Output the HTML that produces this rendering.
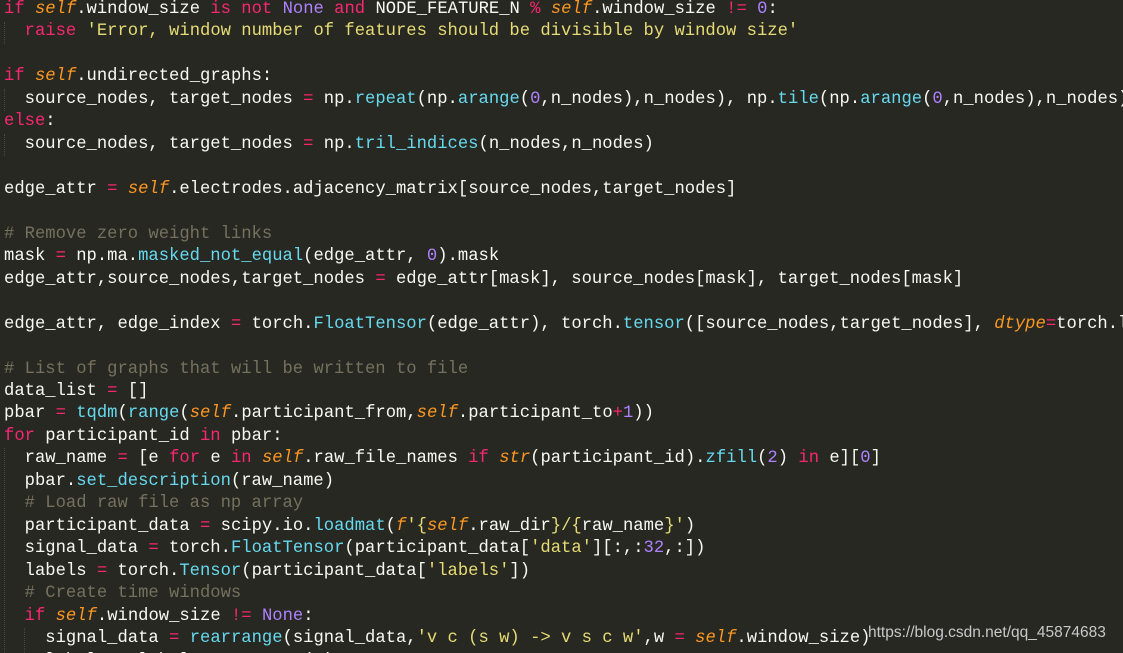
<!DOCTYPE html>
<html><head><meta charset="utf-8"><style>
html,body{margin:0;padding:0;background:#272822;width:1123px;height:653px;overflow:hidden;position:relative}
pre{margin:0;position:absolute;left:4px;top:-1px;font-family:"Liberation Mono","DejaVu Sans Mono",monospace;font-size:17.2px;line-height:22.47px;color:#f8f8f2;white-space:pre}
.k{color:#f92672}.s{color:#fd971f;font-style:italic}.n{color:#ae81ff}.q{color:#e6db74}.f{color:#66d9ef}.c{color:#75715e}
.w{position:absolute;left:868px;top:624px;font-family:"Liberation Sans",Arial,sans-serif;font-size:15.5px;color:#c8c8c8}
.g{position:absolute;width:0;border-left:1px dotted #4a4a44}
</style></head><body>
<div class="g" style="left:4px;top:22px;height:22px"></div>
<div class="g" style="left:4px;top:89px;height:22px"></div>
<div class="g" style="left:4px;top:134px;height:22px"></div>
<div class="g" style="left:4px;top:448px;height:205px"></div>
<div class="g" style="left:24px;top:628px;height:25px"></div>
<pre><span class="k">if</span> <span class="s">self</span>.window_size <span class="k">is</span> <span class="k">not</span> <span class="n">None</span> <span class="k">and</span> NODE_FEATURE_N <span class="k">%</span> <span class="s">self</span>.window_size <span class="k">!=</span> <span class="n">0</span>:
  <span class="k">raise</span> <span class="q">'Error, window number of features should be divisible by window size'</span>

<span class="k">if</span> <span class="s">self</span>.undirected_graphs:
  source_nodes, target_nodes <span class="k">=</span> np.<span class="f">repeat</span>(np.<span class="f">arange</span>(<span class="n">0</span>,n_nodes),n_nodes), np.<span class="f">tile</span>(np.<span class="f">arange</span>(<span class="n">0</span>,n_nodes),n_nodes)
<span class="k">else</span>:
  source_nodes, target_nodes <span class="k">=</span> np.<span class="f">tril_indices</span>(n_nodes,n_nodes)

edge_attr <span class="k">=</span> <span class="s">self</span>.electrodes.adjacency_matrix[source_nodes,target_nodes]

<span class="c"># Remove zero weight links</span>
mask <span class="k">=</span> np.ma.<span class="f">masked_not_equal</span>(edge_attr, <span class="n">0</span>).mask
edge_attr,source_nodes,target_nodes <span class="k">=</span> edge_attr[mask], source_nodes[mask], target_nodes[mask]

edge_attr, edge_index <span class="k">=</span> torch.<span class="f">FloatTensor</span>(edge_attr), torch.<span class="f">tensor</span>([source_nodes,target_nodes], <span class="s">dtype</span><span class="k">=</span>torch.long)

<span class="c"># List of graphs that will be written to file</span>
data_list <span class="k">=</span> []
pbar <span class="k">=</span> <span class="f">tqdm</span>(<span class="f">range</span>(<span class="s">self</span>.participant_from,<span class="s">self</span>.participant_to<span class="k">+</span><span class="n">1</span>))
<span class="k">for</span> participant_id <span class="k">in</span> pbar:
  raw_name <span class="k">=</span> [e <span class="k">for</span> e <span class="k">in</span> <span class="s">self</span>.raw_file_names <span class="k">if</span> <span class="s">str</span>(participant_id).<span class="f">zfill</span>(<span class="n">2</span>) <span class="k">in</span> e][<span class="n">0</span>]
  pbar.<span class="f">set_description</span>(raw_name)
  <span class="c"># Load raw file as np array</span>
  participant_data <span class="k">=</span> scipy.io.<span class="f">loadmat</span>(<span class="s">f</span><span class="q">'{</span><span class="s">self</span>.raw_dir<span class="q">}/{</span>raw_name<span class="q">}'</span>)
  signal_data <span class="k">=</span> torch.<span class="f">FloatTensor</span>(participant_data[<span class="q">'data'</span>][:,:<span class="n">32</span>,:])
  labels <span class="k">=</span> torch.<span class="f">Tensor</span>(participant_data[<span class="q">'labels'</span>])
  <span class="c"># Create time windows</span>
  <span class="k">if</span> <span class="s">self</span>.window_size <span class="k">!=</span> <span class="n">None</span>:
    signal_data <span class="k">=</span> <span class="f">rearrange</span>(signal_data,<span class="q">'v c (s w) -> v s c w'</span>,w <span class="k">=</span> <span class="s">self</span>.window_size)
    labels <span class="k">=</span> labels.<span class="f">unsqueeze</span>(<span class="n">1</span>)</pre>
<div class="w">https://blog.csdn.net/qq_45874683</div>
</body></html>
